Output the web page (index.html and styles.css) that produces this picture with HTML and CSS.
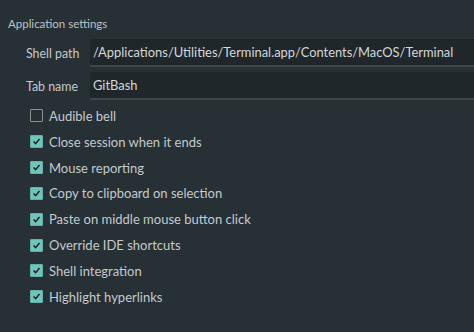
FILE: index.html
```html
<!DOCTYPE html>
<html>
<head>
  <title>Application settings</title>
  <link rel="stylesheet" href="styles.css">
</head>
<body>
  <div class="panel">
    <div class="section-title">Application settings</div>

    <div class="fields">
      <label class="field-label" for="shell-path">Shell path</label>
      <input class="field-input" type="text" id="shell-path" value="/Applications/Utilities/Terminal.app/Contents/MacOS/Terminal">
      <label class="field-label" for="tab-name">Tab name</label>
      <input class="field-input" type="text" id="tab-name" value="GitBash">
    </div>

    <div class="options">
      <label class="option"><span class="box"></span>Audible bell</label>
      <label class="option"><span class="box checked"></span>Close session when it ends</label>
      <label class="option"><span class="box checked"></span>Mouse reporting</label>
      <label class="option"><span class="box checked"></span>Copy to clipboard on selection</label>
      <label class="option"><span class="box checked"></span>Paste on middle mouse button click</label>
      <label class="option"><span class="box checked"></span>Override IDE shortcuts</label>
      <label class="option"><span class="box checked"></span>Shell integration</label>
      <label class="option"><span class="box checked"></span>Highlight hyperlinks</label>
    </div>
  </div>
</body>
</html>
```

FILE: styles.css
```css
html, body {
  margin: 0;
  height: 100%;
}

body {
  background-color: #263035;
  color: #c4cacc;
  font-family: Lato, "Open Sans", sans-serif;
  font-size: 13px;
}

.panel {
  padding: 16px 0 0 8px;
}

.section-title {
  font-size: 11.5px;
  line-height: 16px;
  margin-bottom: 7px;
  color: #bcc3c6;
}

.fields {
  display: grid;
  grid-template-columns: 82px 1fr;
  row-gap: 5px;
  align-items: center;
}

.field-label {
  padding-left: 18px;
  font-size: 12.4px;
}

.field-input {
  height: 28px;
  box-sizing: border-box;
  border: none;
  border-bottom: 2px solid #3d484d;
  background-color: #1f272b;
  color: #d3d8da;
  font-family: inherit;
  font-size: 12.9px;
  padding: 0 3px;
  outline: none;
}

.options {
  display: flex;
  flex-direction: column;
  margin-top: 3px;
  padding-left: 22px;
}

.option {
  display: flex;
  align-items: center;
  gap: 6px;
  height: 25.85px;
}

.box {
  width: 13px;
  height: 13px;
  box-sizing: border-box;
  border: 1px solid #8a9396;
  border-radius: 1px;
}

.box.checked {
  background-color: #70c4bc;
  border-color: #62b1a9;
  background-image: url("data:image/svg+xml;utf8,<svg xmlns='http://www.w3.org/2000/svg' viewBox='0 0 13 13'><path d='M3 6.5 L5.5 9 L10 3.5' fill='none' stroke='%231c2629' stroke-width='1.8'/></svg>");
}
```
